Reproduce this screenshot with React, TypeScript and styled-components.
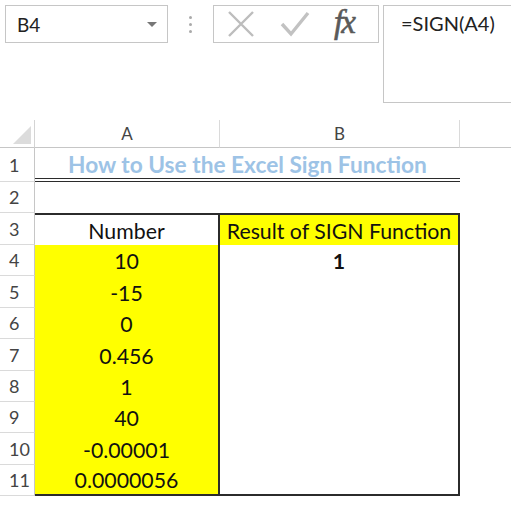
import React, { FC } from "react";
import styled, { createGlobalStyle, css } from "styled-components";

const GlobalStyle = createGlobalStyle`
  html, body {
    margin: 0;
    padding: 0;
    background: #ffffff;
  }
  body {
    font-family: Lato, "Liberation Sans", sans-serif;
    overflow: hidden;
  }
`;

const Page = styled.div`
  width: 511px;
  height: 505px;
  display: flex;
  flex-direction: column;
  overflow: hidden;
`;

const FormulaBar = styled.div`
  display: flex;
  flex-direction: row;
  align-items: flex-start;
  padding: 5px 0 0 5px;
  height: 115px;
  box-sizing: border-box;
`;

const NameBox = styled.div`
  width: 163px;
  height: 38px;
  box-sizing: border-box;
  border: 1px solid #c6c6c6;
  display: flex;
  align-items: center;
  justify-content: space-between;
  padding: 0 10px 0 11px;
  font-size: 19px;
  color: #222;
`;

const DropArrow = styled.span`
  width: 0;
  height: 0;
  border-left: 5px solid transparent;
  border-right: 5px solid transparent;
  border-top: 5px solid #777;
`;

const Grip = styled.div`
  width: 45px;
  height: 38px;
  display: flex;
  flex-direction: column;
  align-items: center;
  justify-content: center;
  gap: 4px;
`;

const GripDot = styled.span`
  width: 3px;
  height: 3px;
  background: #aaa;
  border-radius: 50%;
`;

const ButtonBox = styled.div`
  width: 166px;
  height: 38px;
  box-sizing: border-box;
  border: 1px solid #c6c6c6;
  display: flex;
  align-items: center;
  padding: 0 0 0 12px;
  gap: 24px;
`;

const Fx = styled.span`
  font-family: "Liberation Serif", serif;
  font-style: italic;
  font-size: 33px;
  color: #5a5a5a;
  letter-spacing: -2px;
  line-height: 1;
  margin-top: -4px;
  -webkit-text-stroke: 0.6px #5a5a5a;
`;

const FormulaInput = styled.div`
  margin-left: 4px;
  flex: 1;
  height: 98px;
  box-sizing: border-box;
  border: 1px solid #c6c6c6;
  border-right: none;
  padding: 5px 0 0 17px;
  font-size: 20px;
  color: #222;
`;

const Sheet = styled.div`
  display: grid;
  grid-template-columns: 35px 185px 240px 1fr;
  grid-template-rows: 28px 34px 31px 32px 31px 32px 31px 32px 31px 31px 32px 31px;
  margin-top: 5px;
`;

const Corner = styled.div`
  border-right: 1px solid #d4d4d4;
  border-bottom: 1px solid #c6c6c6;
  display: flex;
  align-items: flex-end;
  justify-content: flex-end;
  padding: 0 3px 3px 0;
`;

const ColHead = styled.div<{ $last?: boolean }>`
  border-bottom: 1px solid #c6c6c6;
  border-right: ${(p) => (p.$last ? "none" : "1px solid #dadada")};
  display: flex;
  align-items: center;
  justify-content: center;
  font-size: 17px;
  color: #444;
`;

const RowHead = styled.div`
  border-right: 1px solid #c6c6c6;
  border-bottom: 1px solid #dadada;
  display: flex;
  align-items: center;
  padding-left: 9px;
  font-size: 18px;
  color: #444;
`;

type CellProps = {
  $fill?: boolean;
  $top?: boolean;
  $left?: boolean;
  $right?: boolean;
  $bottom?: boolean;
  $bold?: boolean;
};

const line = "2px solid #2b2b2b";

const Cell = styled.div<CellProps>`
  display: flex;
  align-items: center;
  justify-content: center;
  font-size: 21.3px;
  color: #111;
  white-space: nowrap;
  box-sizing: border-box;
  padding-top: 1px;
  background: ${(p) => (p.$fill ? "#ffff00" : "transparent")};
  font-weight: ${(p) => (p.$bold ? 700 : 400)};
  ${(p) => p.$top && css`border-top: ${line};`}
  ${(p) => p.$left && css`border-left: ${line};`}
  ${(p) => p.$right && css`border-right: ${line};`}
  ${(p) => p.$bottom && css`border-bottom: ${line};`}
`;

const TitleCell = styled.div`
  grid-column: 2 / span 2;
  border-bottom: 4px double #2b2b2b;
  display: flex;
  align-items: center;
  justify-content: center;
  font-size: 22.7px;
  font-weight: 700;
  color: #9dc3e6;
  padding-top: 2px;
  white-space: nowrap;
`;

const Blank = styled.div``;

const numbers = ["10", "-15", "0", "0.456", "1", "40", "-0.00001", "0.0000056"];

const CrossIcon: FC = () => (
  <svg width="30" height="30" viewBox="0 0 30 30">
    <path d="M3 3 L27 27 M27 3 L3 27" stroke="#bdbdbd" strokeWidth="2.4" fill="none" />
  </svg>
);

const CheckIcon: FC = () => (
  <svg width="30" height="30" viewBox="0 0 30 30">
    <path d="M2 15 L11 25 L28 4" stroke="#c2c2c2" strokeWidth="3.4" fill="none" />
  </svg>
);

const CornerTriangle: FC = () => (
  <svg width="18" height="18" viewBox="0 0 18 18">
    <polygon points="18,0 18,18 0,18" fill="#dcdcdc" />
  </svg>
);

const App: FC = () => {
  return (
    <Page>
      <GlobalStyle />
      <FormulaBar>
        <NameBox>
          B4
          <DropArrow />
        </NameBox>
        <Grip>
          <GripDot />
          <GripDot />
          <GripDot />
        </Grip>
        <ButtonBox>
          <CrossIcon />
          <CheckIcon />
          <Fx>fx</Fx>
        </ButtonBox>
        <FormulaInput>=SIGN(A4)</FormulaInput>
      </FormulaBar>
      <Sheet>
        <Corner>
          <CornerTriangle />
        </Corner>
        <ColHead>A</ColHead>
        <ColHead>B</ColHead>
        <ColHead $last />

        <RowHead>1</RowHead>
        <TitleCell>How to Use the Excel Sign Function</TitleCell>
        <Blank />

        <RowHead>2</RowHead>
        <Cell />
        <Cell />
        <Blank />

        <RowHead>3</RowHead>
        <Cell $top $right>Number</Cell>
        <Cell $top $right $fill>Result of SIGN Function</Cell>
        <Blank />

        {numbers.map((n, i) => {
          const last = i === numbers.length - 1;
          return (
            <React.Fragment key={n}>
              <RowHead>{i + 4}</RowHead>
              <Cell $fill $right $bottom={last}>{n}</Cell>
              <Cell $right $bottom={last} $bold={i === 0}>{i === 0 ? "1" : ""}</Cell>
              <Blank />
            </React.Fragment>
          );
        })}
      </Sheet>
    </Page>
  );
};

export default App;
